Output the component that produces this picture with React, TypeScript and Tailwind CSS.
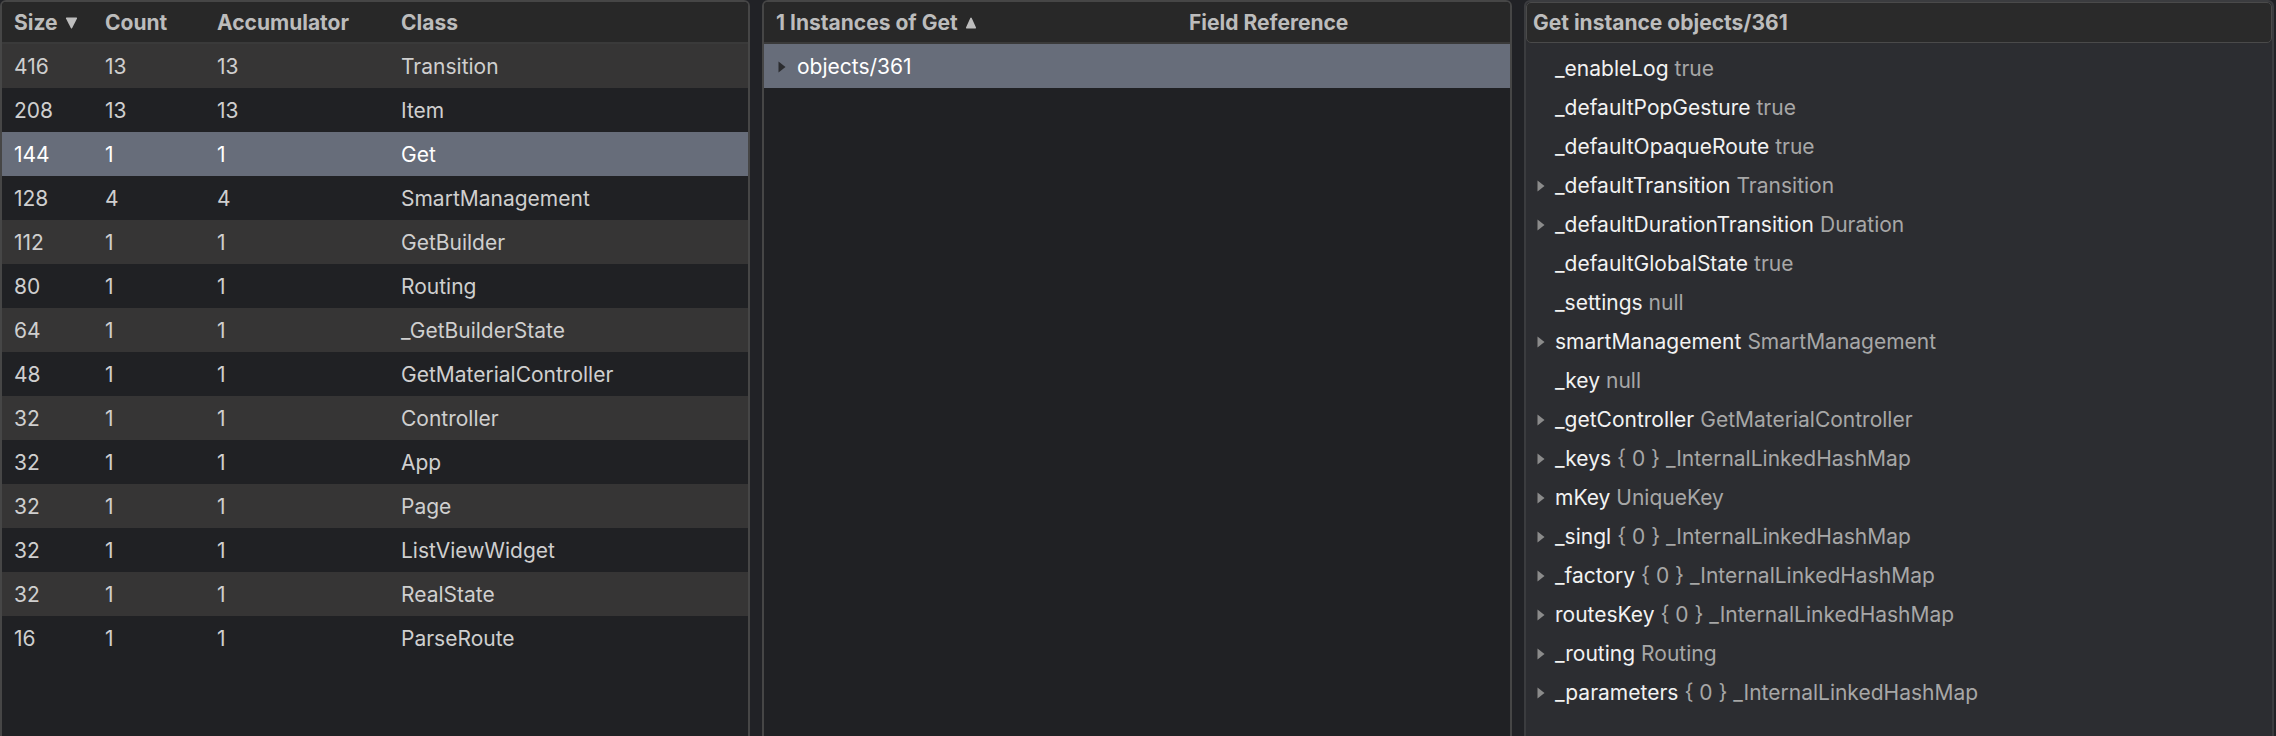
import React from "react";

const leftRows: [string, string, string, string][] = [
  ["416", "13", "13", "Transition"],
  ["208", "13", "13", "Item"],
  ["144", "1", "1", "Get"],
  ["128", "4", "4", "SmartManagement"],
  ["112", "1", "1", "GetBuilder"],
  ["80", "1", "1", "Routing"],
  ["64", "1", "1", "_GetBuilderState"],
  ["48", "1", "1", "GetMaterialController"],
  ["32", "1", "1", "Controller"],
  ["32", "1", "1", "App"],
  ["32", "1", "1", "Page"],
  ["32", "1", "1", "ListViewWidget"],
  ["32", "1", "1", "RealState"],
  ["16", "1", "1", "ParseRoute"],
];

const fields: [string, string, boolean][] = [
  ["_enableLog", "true", false],
  ["_defaultPopGesture", "true", false],
  ["_defaultOpaqueRoute", "true", false],
  ["_defaultTransition", "Transition", true],
  ["_defaultDurationTransition", "Duration", true],
  ["_defaultGlobalState", "true", false],
  ["_settings", "null", false],
  ["smartManagement", "SmartManagement", true],
  ["_key", "null", false],
  ["_getController", "GetMaterialController", true],
  ["_keys", "{ 0 } _InternalLinkedHashMap", true],
  ["mKey", "UniqueKey", true],
  ["_singl", "{ 0 } _InternalLinkedHashMap", true],
  ["_factory", "{ 0 } _InternalLinkedHashMap", true],
  ["routesKey", "{ 0 } _InternalLinkedHashMap", true],
  ["_routing", "Routing", true],
  ["_parameters", "{ 0 } _InternalLinkedHashMap", true],
];

function Caret({ color }: { color: string }) {
  return (
    <svg width="8" height="12" viewBox="0 0 8 12" className="shrink-0">
      <path d="M0.5 0.5 L7.5 6 L0.5 11.5 Z" fill={color} />
    </svg>
  );
}

function SortDown() {
  return (
    <svg width="13" height="12" viewBox="0 0 13 12" className="ml-[7px] shrink-0">
      <path d="M1 1.5 Q0.5 0.5 1.8 0.5 L11.2 0.5 Q12.5 0.5 12 1.5 L7.2 11 Q6.5 12 5.8 11 Z" fill="#bdbdbd" />
    </svg>
  );
}

function SortUp() {
  return (
    <svg width="12" height="12" viewBox="0 0 12 12" className="ml-[7px] shrink-0">
      <path d="M1 10.5 Q0.5 11.5 1.8 11.5 L10.2 11.5 Q11.5 11.5 11 10.5 L6.7 1 Q6 0 5.3 1 Z" fill="#bdbdbd" />
    </svg>
  );
}

export default function App() {
  return (
    <div
      className="w-[2276px] h-[736px] overflow-hidden bg-[#212226] flex gap-[12px]"
      style={{ fontFamily: "Inter, 'Noto Sans', sans-serif" }}
    >
      {/* Panel 1 */}
      <div className="w-[750px] h-[760px] shrink-0 border-2 border-[#464646] rounded-t-[6px] bg-[#202124] flex flex-col overflow-hidden">
        <div className="h-[42px] shrink-0 bg-[#282828] border-b-2 border-[#3a3a3a] flex items-center pl-[12px] pt-[2px] text-[21px] font-bold text-[#bcbcbc]">
          <div className="w-[91px] flex items-center">
            Size
            <SortDown />
          </div>
          <div className="w-[112px]">Count</div>
          <div className="w-[184px]">Accumulator</div>
          <div>Class</div>
        </div>
        {leftRows.map((r, i) => (
          <div
            key={i}
            className={
              i === 2
                ? "h-[44px] shrink-0 flex items-center pl-[12px] pt-[2px] text-[21px] bg-[#676d7a] text-[#ffffff]"
                : i % 2 === 0
                ? "h-[44px] shrink-0 flex items-center pl-[12px] pt-[2px] text-[21px] bg-[#363535] text-[#cfcfcf]"
                : "h-[44px] shrink-0 flex items-center pl-[12px] pt-[2px] text-[21px] bg-[#202124] text-[#cfcfcf]"
            }
          >
            <div className="w-[91px]">{r[0]}</div>
            <div className="w-[112px]">{r[1]}</div>
            <div className="w-[184px]">{r[2]}</div>
            <div>{r[3]}</div>
          </div>
        ))}
      </div>

      {/* Panel 2 */}
      <div className="w-[750px] h-[760px] shrink-0 border-2 border-[#464646] rounded-t-[6px] bg-[#202124] flex flex-col overflow-hidden">
        <div className="h-[42px] shrink-0 bg-[#282828] border-b-2 border-[#3a3a3a] flex items-center pl-[12px] pt-[2px] text-[21px] font-bold text-[#bcbcbc]">
          <div className="w-[413px] flex items-center">
            1 Instances of Get
            <SortUp />
          </div>
          <div>Field Reference</div>
        </div>
        <div className="h-[44px] shrink-0 bg-[#676d7a] flex items-center pl-[14px] pt-[2px] text-[21px] text-[#ffffff]">
          <Caret color="#2b2c2f" />
          <span className="ml-[11px]">objects/361</span>
        </div>
      </div>

      {/* Panel 3 */}
      <div className="w-[750px] h-[760px] shrink-0 border-2 border-[#3b3c3f] rounded-t-[6px] bg-[#2c2d31] flex flex-col overflow-hidden">
        <div className="h-[41px] shrink-0 bg-[#2a2a2a] border border-[#4a4a4a] rounded-[5px] flex items-center pl-[6px] pt-[1px] text-[21px] font-bold text-[#bdbdbd]">
          Get instance objects/361
        </div>
        <div className="pt-[6px] flex flex-col">
          {fields.map((f, i) => (
            <div key={i} className="h-[39px] shrink-0 flex items-center pl-[11px] text-[21px]">
              <div className="w-[8px] flex items-center">
                {f[2] ? <Caret color="#8b8b8b" /> : null}
              </div>
              <span className="ml-[10px] text-[#f2f2f2]">{f[0]}</span>
              <span className="ml-[6px] text-[#a7a7a7]">{f[1]}</span>
            </div>
          ))}
        </div>
      </div>
    </div>
  );
}
